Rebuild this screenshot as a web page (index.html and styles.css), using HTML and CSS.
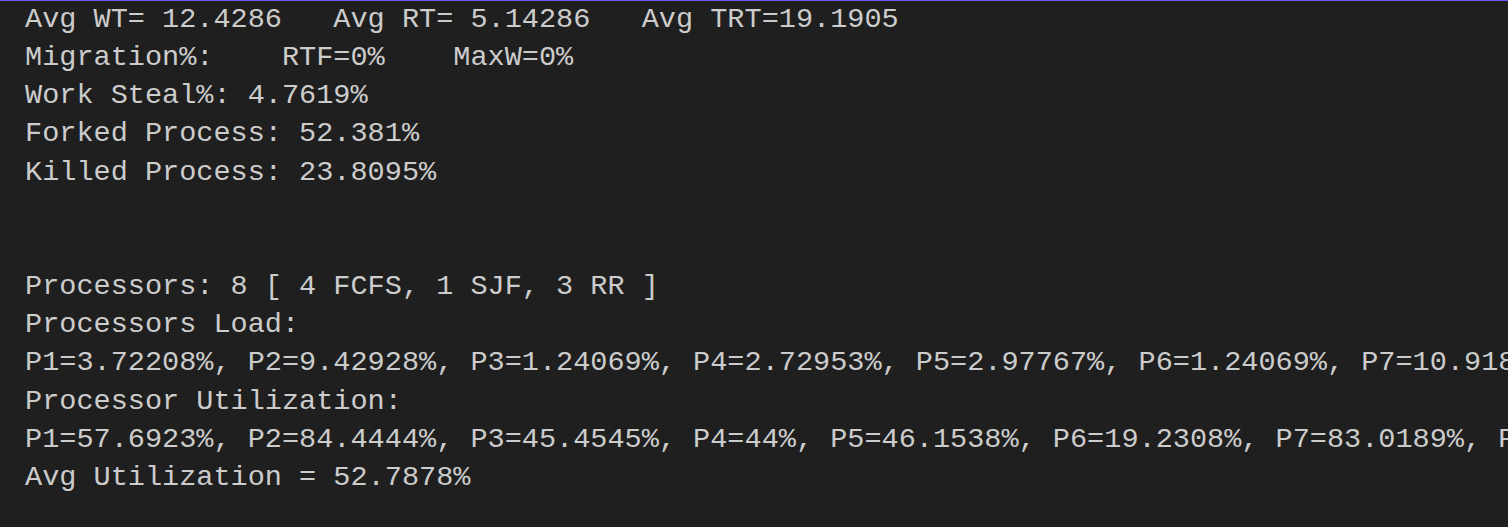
FILE: index.html
```html
<!DOCTYPE html>
<html>
<head>
<meta charset="utf-8">
<link rel="stylesheet" href="styles.css">
</head>
<body>
<div class="terminal">
<div class="line">Avg WT= 12.4286   Avg RT= 5.14286   Avg TRT=19.1905</div>
<div class="line">Migration%:    RTF=0%    MaxW=0%</div>
<div class="line">Work Steal%: 4.7619%</div>
<div class="line">Forked Process: 52.381%</div>
<div class="line">Killed Process: 23.8095%</div>
<div class="line"> </div>
<div class="line"> </div>
<div class="line">Processors: 8 [ 4 FCFS, 1 SJF, 3 RR ]</div>
<div class="line">Processors Load:</div>
<div class="line">P1=3.72208%, P2=9.42928%, P3=1.24069%, P4=2.72953%, P5=2.97767%, P6=1.24069%, P7=10.9181%, P8=3.22581%</div>
<div class="line">Processor Utilization:</div>
<div class="line">P1=57.6923%, P2=84.4444%, P3=45.4545%, P4=44%, P5=46.1538%, P6=19.2308%, P7=83.0189%, P8=42.3077%</div>
<div class="line">Avg Utilization = 52.7878%</div>
</div>
</body>
</html>
```
FILE: styles.css
```css
html, body {
  margin: 0;
  padding: 0;
  background: #1f1f1f;
  overflow: hidden;
}
.terminal {
  border-top: 1px solid #6c5af5;
  height: 527px;
  padding: 0 0 0 25px;
  box-sizing: border-box;
  font-family: "Liberation Mono", "DejaVu Sans Mono", monospace;
  font-size: 28.55px;
  line-height: 38.17px;
  color: #cccccc;
  overflow: hidden;
}
.line {
  white-space: pre;
  height: 38.17px;
}
```
